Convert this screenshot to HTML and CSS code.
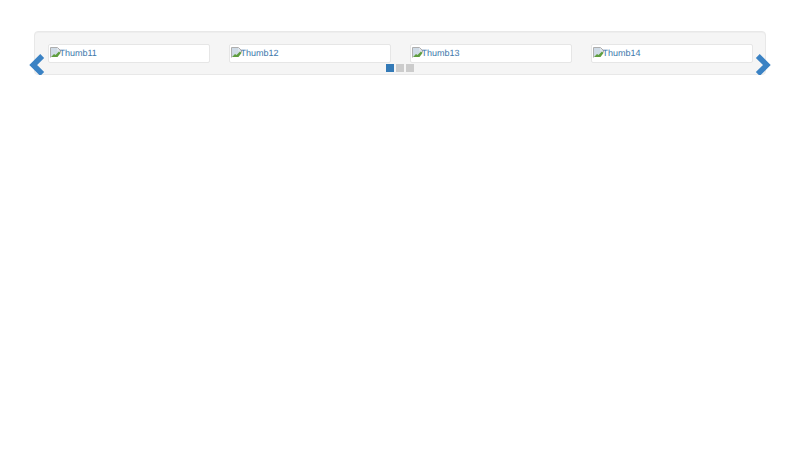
FILE: index.html
```html
<!DOCTYPE html>
<html lang="en">
<head>
<meta charset="utf-8">
<title>Carousel</title>
<link rel="stylesheet" href="styles.css">
</head>
<body>
<section class="well">
  <a class="arrow arrow-left" href="#" aria-label="Previous"><svg width="16" height="24" viewBox="0 0 16 24"><polyline points="13.2,3 4.2,12 13.2,21" fill="none" stroke="#3a82c4" stroke-width="5.500"/></svg></a>
  <div class="thumbs">
    <a class="thumb" href="#"><svg class="broken" width="11" height="11" viewBox="0 0 11 11"><path d="M.5 10.500V.5h7l3 3v2" fill="#dfe6ec" stroke="#aeaeae"/><path d="M1 10V1h6v3l3 1-5 5z" fill="#cfdbe6"/><path d="M1 10l3-3 1.500 1 3.500-3.500 1.500 1.500-3 4z" fill="#5f9e3f"/></svg><span>Thumb11</span></a>
    <a class="thumb" href="#"><svg class="broken" width="11" height="11" viewBox="0 0 11 11"><path d="M.5 10.500V.5h7l3 3v2" fill="#dfe6ec" stroke="#aeaeae"/><path d="M1 10V1h6v3l3 1-5 5z" fill="#cfdbe6"/><path d="M1 10l3-3 1.500 1 3.500-3.500 1.500 1.500-3 4z" fill="#5f9e3f"/></svg><span>Thumb12</span></a>
    <a class="thumb" href="#"><svg class="broken" width="11" height="11" viewBox="0 0 11 11"><path d="M.5 10.500V.5h7l3 3v2" fill="#dfe6ec" stroke="#aeaeae"/><path d="M1 10V1h6v3l3 1-5 5z" fill="#cfdbe6"/><path d="M1 10l3-3 1.500 1 3.500-3.500 1.500 1.500-3 4z" fill="#5f9e3f"/></svg><span>Thumb13</span></a>
    <a class="thumb" href="#"><svg class="broken" width="11" height="11" viewBox="0 0 11 11"><path d="M.5 10.500V.5h7l3 3v2" fill="#dfe6ec" stroke="#aeaeae"/><path d="M1 10V1h6v3l3 1-5 5z" fill="#cfdbe6"/><path d="M1 10l3-3 1.500 1 3.500-3.500 1.500 1.500-3 4z" fill="#5f9e3f"/></svg><span>Thumb14</span></a>
  </div>
  <div class="dots">
    <span class="dot dot-active"></span>
    <span class="dot"></span>
    <span class="dot"></span>
  </div>
  <a class="arrow arrow-right" href="#" aria-label="Next"><svg width="16" height="24" viewBox="0 0 16 24"><polyline points="2.8,3 11.800,12 2.8,21" fill="none" stroke="#3a82c4" stroke-width="5.500"/></svg></a>
</section>
</body>
</html>
```
FILE: styles.css
```css
html, body {
  margin: 0;
  padding: 0;
  background: #fff;
  font-family: "Liberation Sans", Arial, sans-serif;
}
body {
  padding: 31px 34px 0;
}
.well {
  position: relative;
  box-sizing: border-box;
  height: 44px;
  padding: 12px 12px 0 13px;
  background: #f5f5f5;
  border: 1px solid #e8e8e8;
  border-radius: 4px;
  box-shadow: inset 0 1px 1px rgba(0, 0, 0, .03);
}
.thumbs {
  display: flex;
  gap: 19px;
}
.thumb {
  box-sizing: border-box;
  display: flex;
  align-items: flex-start;
  width: 162px;
  height: 19px;
  padding: 2px 0 0 1px;
  background: #fff;
  border: 1px solid #e6e6e6;
  border-radius: 2px;
  color: #3d78ab;
  font-size: 9px;
  line-height: 12px;
  text-decoration: none;
  text-rendering: geometricPrecision;
}
.thumb span {
  margin-left: -1.500px;
}
.broken {
  flex: none;
  display: block;
}
.dots {
  display: flex;
  justify-content: center;
  gap: 2px;
  margin-top: 1px;
  padding-right: 2px;
}
.dot {
  width: 8px;
  height: 8px;
  background: #ccc;
}
.dot-active {
  background: #337ab7;
}
.arrow {
  position: absolute;
  top: 21px;
  display: block;
  line-height: 0;
}
.arrow-left {
  left: -6px;
}
.arrow-right {
  right: -6px;
}
```
